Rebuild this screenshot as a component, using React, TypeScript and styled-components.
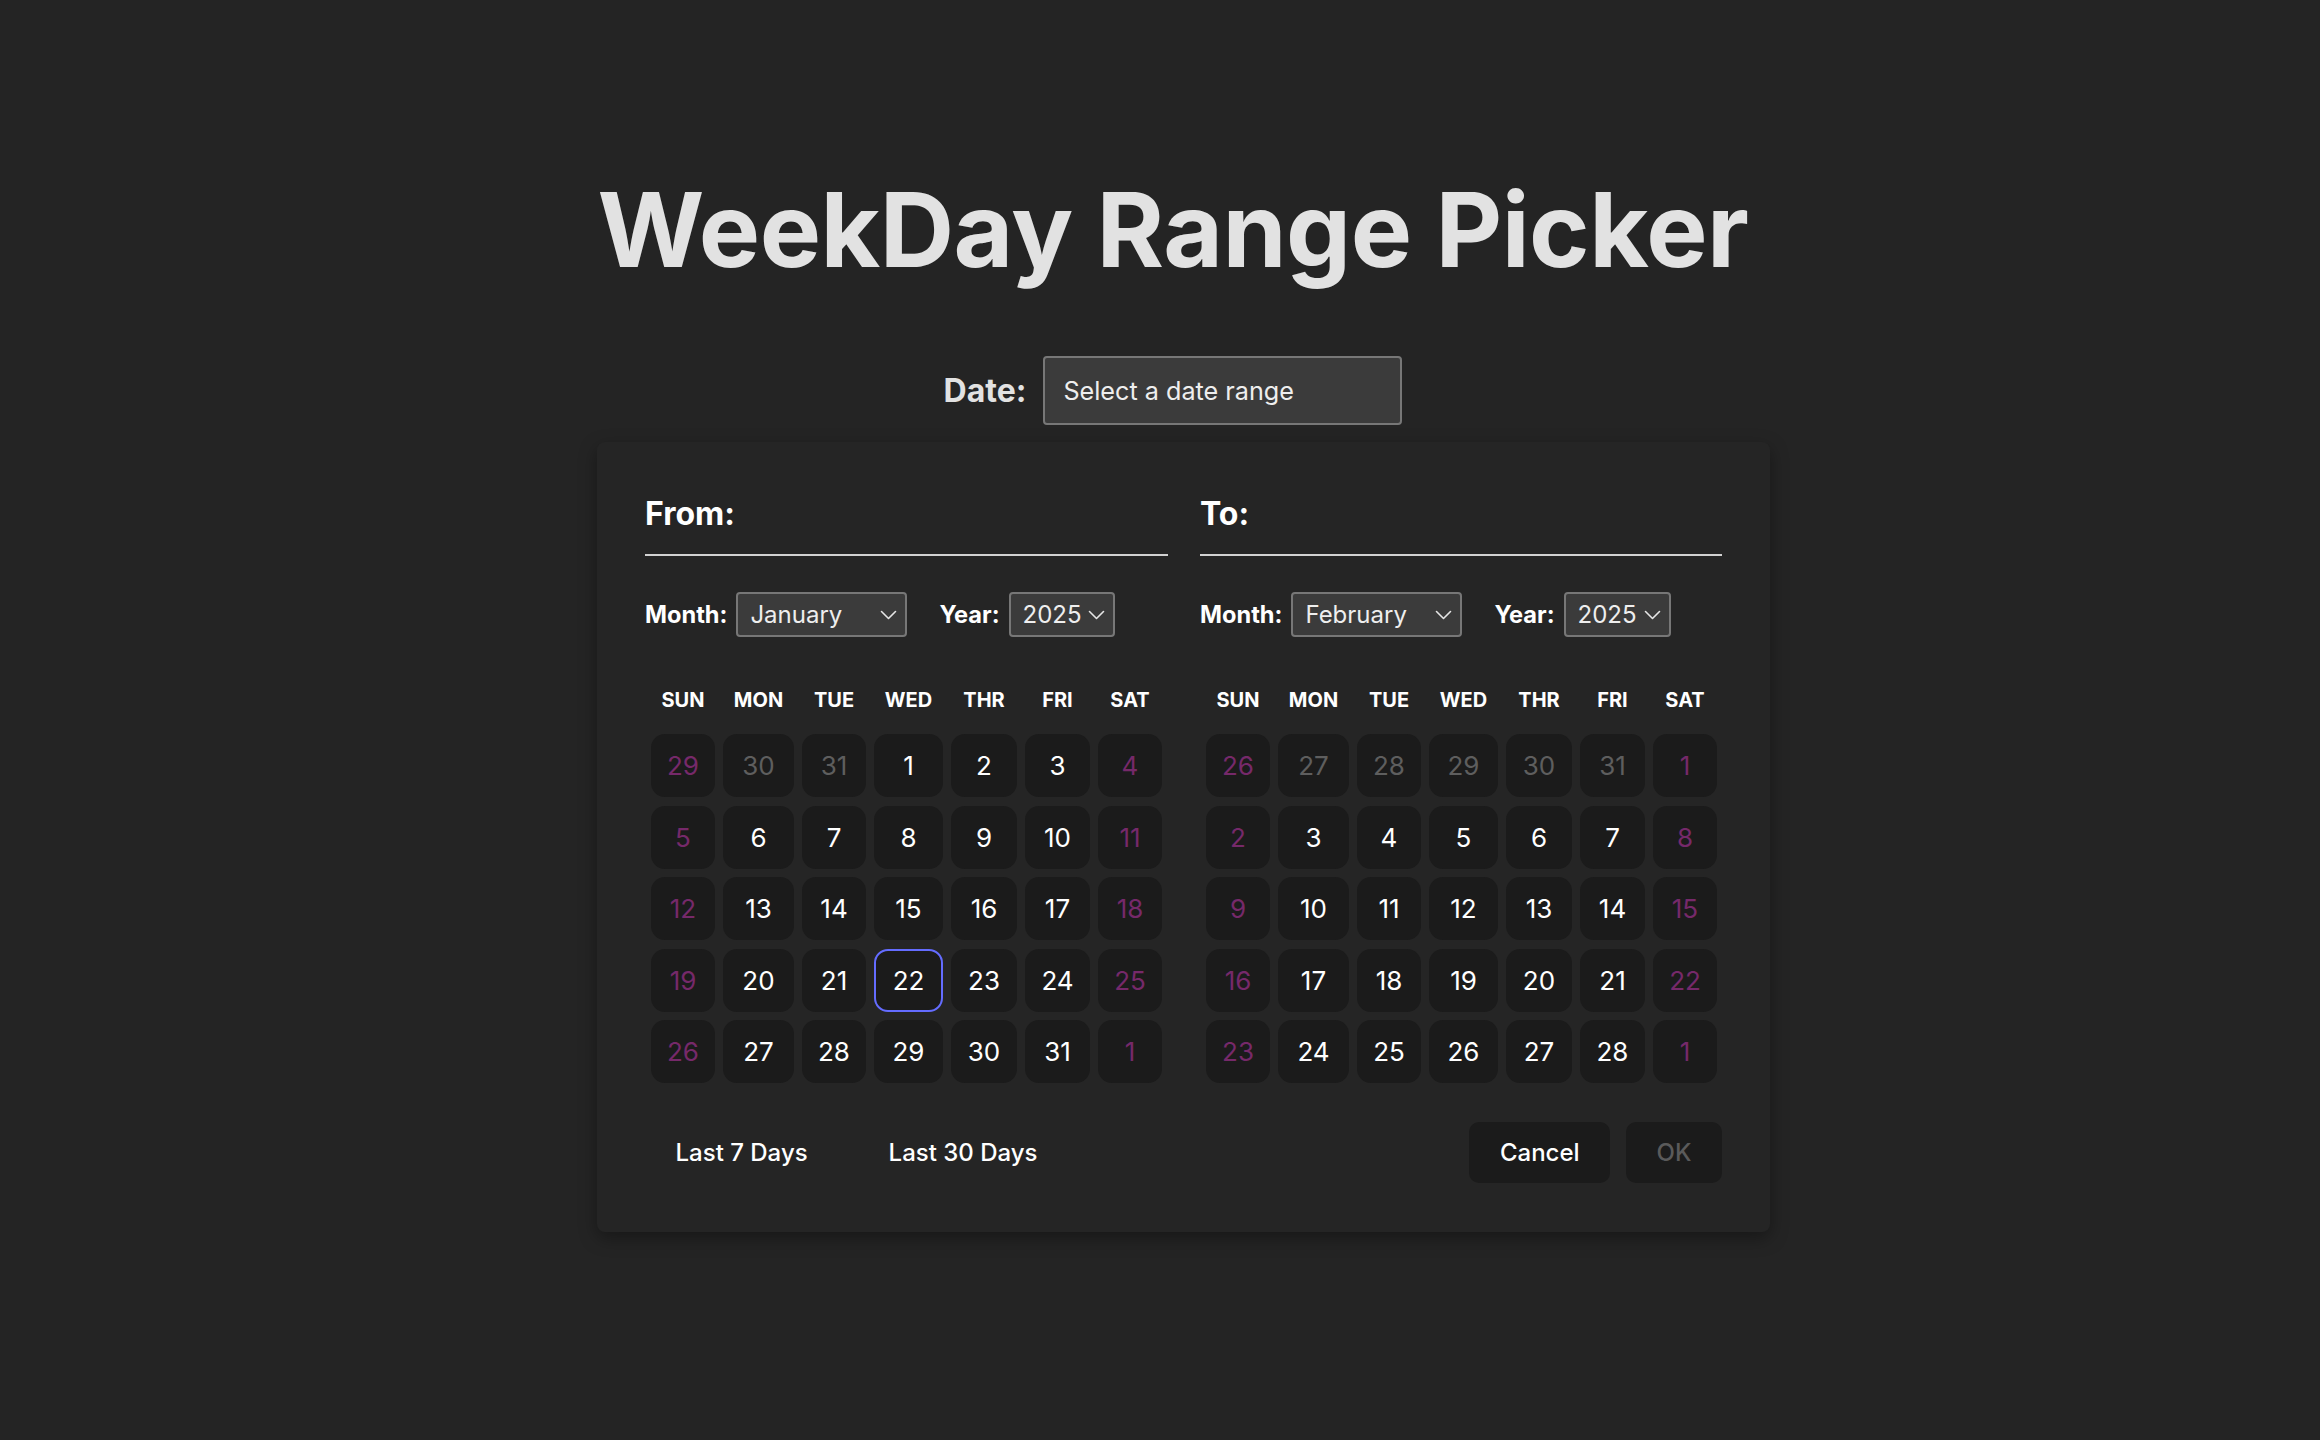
import React from "react";
import styled, { createGlobalStyle } from "styled-components";

const GlobalStyle = createGlobalStyle`
  html, body { margin: 0; padding: 0; }
  body {
    background: #242424;
    font-family: Inter, "Noto Sans", "Liberation Sans", sans-serif;
    color: rgba(255,255,255,0.87);
  }
  * { box-sizing: border-box; }
`;

const Page = styled.main`
  display: flex;
  flex-direction: column;
  align-items: center;
  padding: 173px 0 0 26px;
  min-height: 1440px;
`;

const Title = styled.h1`
  margin: 0;
  font-size: 103px;
  line-height: 113px;
  font-weight: 700;
  color: #e2e2e2;
  letter-spacing: -0.5px;
`;

const DateRow = styled.div`
  display: flex;
  align-items: center;
  gap: 17px;
  margin-top: 70px;
`;

const DateLabel = styled.label`
  font-size: 32px;
  font-weight: 700;
  color: #e2e2e2;
`;

const DateInput = styled.input`
  width: 359px;
  height: 69px;
  background: #3b3b3b;
  border: 2px solid #777;
  border-radius: 4px;
  padding: 0 18px;
  font-family: inherit;
  font-size: 25.2px;
  color: #eee;
  outline: none;
  &::placeholder { color: #eee; opacity: 1; }
`;

const Panel = styled.section`
  width: 1173px;
  margin: 17px 0 0 21px;
  padding: 53px 48px 49px 48px;
  background: #252525;
  border-radius: 8px;
  box-shadow: 0 6px 18px rgba(0,0,0,0.35);
  display: grid;
  grid-template-columns: 523px 522px;
  column-gap: 32px;
`;

const Column = styled.div`
  display: flex;
  flex-direction: column;
`;

const Heading = styled.h2`
  margin: 0;
  font-size: 32px;
  line-height: 38px;
  font-weight: 700;
  color: #fff;
  padding-bottom: 21px;
  border-bottom: 2px solid #d2d2d2;
`;

const Controls = styled.div`
  display: flex;
  align-items: center;
  height: 45px;
  margin-top: 36px;
`;

const ControlLabel = styled.span<{ $spaced?: boolean }>`
  font-size: 23.6px;
  font-weight: 700;
  color: #fff;
  margin-right: 9px;
  margin-left: ${(p) => (p.$spaced ? "32px" : "0")};
`;

const SelectWrap = styled.div<{ $w: number }>`
  position: relative;
  width: ${(p) => p.$w}px;
  height: 45px;
`;

const Select = styled.select`
  appearance: none;
  -webkit-appearance: none;
  width: 100%;
  height: 100%;
  background: #3b3b3b;
  border: 2px solid #777;
  border-radius: 4px;
  padding: 0 0 0 12px;
  font-family: inherit;
  font-size: 24px;
  color: #eee;
  outline: none;
`;

const Chevron = styled.svg`
  position: absolute;
  right: 10px;
  top: 50%;
  transform: translateY(-50%);
  pointer-events: none;
`;

const COLS = "64px 71px 64px 69px 66px 65px 64px";

const WeekHeader = styled.div`
  display: grid;
  grid-template-columns: ${COLS};
  column-gap: 8px;
  padding-left: 6px;
  margin-top: 51px;
`;

const WeekName = styled.div`
  font-size: 20px;
  line-height: 24px;
  font-weight: 700;
  color: #fff;
  text-align: center;
`;

const DayGrid = styled.div`
  display: grid;
  grid-template-columns: ${COLS};
  grid-auto-rows: 63px;
  column-gap: 8px;
  row-gap: 8.5px;
  padding-left: 6px;
  margin-top: 22px;
`;

type Kind = "cur" | "out" | "weekend";

const Day = styled.button<{ $kind: Kind; $today?: boolean }>`
  display: flex;
  align-items: center;
  justify-content: center;
  background: #1b1b1b;
  border: 2px solid ${(p) => (p.$today ? "#646cff" : "transparent")};
  border-radius: 14px;
  font-family: inherit;
  font-size: 26px;
  font-weight: 400;
  padding: 0;
  cursor: pointer;
  color: ${(p) =>
    p.$kind === "weekend" ? "#76296a" : p.$kind === "out" ? "#5e5e5e" : "#fff"};
`;

const Footer = styled.div`
  grid-column: 1 / -1;
  display: flex;
  justify-content: space-between;
  align-items: center;
  margin-top: 39px;
`;

const Group = styled.div<{ $gap: number }>`
  display: flex;
  gap: ${(p) => p.$gap}px;
`;

const Btn = styled.button<{ $variant: "ghost" | "solid" | "disabled" }>`
  font-family: inherit;
  font-size: 24px;
  line-height: 29px;
  font-weight: 500;
  padding: 15px 29.5px;
  border: 1px solid transparent;
  border-radius: 10px;
  cursor: pointer;
  background: ${(p) => (p.$variant === "ghost" ? "transparent" : "#1b1b1b")};
  color: ${(p) => (p.$variant === "disabled" ? "#5a5a5a" : "#fff")};
`;

const WEEK = ["SUN", "MON", "TUE", "WED", "THR", "FRI", "SAT"];
const MONTHS = [
  "January", "February", "March", "April", "May", "June",
  "July", "August", "September", "October", "November", "December",
];

function buildMonth(year: number, month: number) {
  const first = new Date(year, month, 1);
  const start = new Date(year, month, 1 - first.getDay());
  const last = new Date(year, month + 1, 0);
  const cells: { d: number; kind: Kind; date: Date }[] = [];
  const cur = new Date(start);
  while (true) {
    const dow = cur.getDay();
    const inMonth = cur.getMonth() === month;
    const kind: Kind = dow === 0 || dow === 6 ? "weekend" : inMonth ? "cur" : "out";
    cells.push({ d: cur.getDate(), kind, date: new Date(cur) });
    cur.setDate(cur.getDate() + 1);
    if (cur > last && cur.getDay() === 0) break;
  }
  return cells;
}

const ChevronIcon = () => (
  <Chevron width="17" height="10" viewBox="0 0 17 10">
    <path d="M1.5 1.5 L8.5 8.5 L15.5 1.5" fill="none" stroke="#e6e6e6" strokeWidth="1.6" strokeLinecap="round" strokeLinejoin="round" />
  </Chevron>
);

function CalendarColumn({ title, month, year, monthW, yearW, todayDay }: {
  title: string; month: number; year: number; monthW: number; yearW: number; todayDay?: number;
}) {
  const cells = buildMonth(year, month);
  return (
    <Column>
      <Heading>{title}</Heading>
      <Controls>
        <ControlLabel>Month:</ControlLabel>
        <SelectWrap $w={monthW}>
          <Select defaultValue={month}>
            {MONTHS.map((m, i) => (
              <option key={m} value={i}>{m}</option>
            ))}
          </Select>
          <ChevronIcon />
        </SelectWrap>
        <ControlLabel $spaced>Year:</ControlLabel>
        <SelectWrap $w={yearW}>
          <Select defaultValue={year}>
            {[2023, 2024, 2025, 2026, 2027].map((y) => (
              <option key={y} value={y}>{y}</option>
            ))}
          </Select>
          <ChevronIcon />
        </SelectWrap>
      </Controls>
      <WeekHeader>
        {WEEK.map((w) => (
          <WeekName key={w}>{w}</WeekName>
        ))}
      </WeekHeader>
      <DayGrid>
        {cells.map((c, i) => (
          <Day
            key={i}
            $kind={c.kind}
            $today={todayDay !== undefined && c.date.getMonth() === month && c.d === todayDay}
          >
            {c.d}
          </Day>
        ))}
      </DayGrid>
    </Column>
  );
}

export default function App() {
  return (
    <>
      <GlobalStyle />
      <Page>
        <Title>WeekDay Range Picker</Title>
        <DateRow>
          <DateLabel htmlFor="date">Date:</DateLabel>
          <DateInput id="date" readOnly placeholder="Select a date range" />
        </DateRow>
        <Panel>
          <CalendarColumn title="From:" month={0} year={2025} monthW={171} yearW={106} todayDay={22} />
          <CalendarColumn title="To:" month={1} year={2025} monthW={171} yearW={107} />
          <Footer>
            <Group $gap={20}>
              <Btn $variant="ghost">Last 7 Days</Btn>
              <Btn $variant="ghost">Last 30 Days</Btn>
            </Group>
            <Group $gap={16}>
              <Btn $variant="solid">Cancel</Btn>
              <Btn $variant="disabled" disabled>OK</Btn>
            </Group>
          </Footer>
        </Panel>
      </Page>
    </>
  );
}
